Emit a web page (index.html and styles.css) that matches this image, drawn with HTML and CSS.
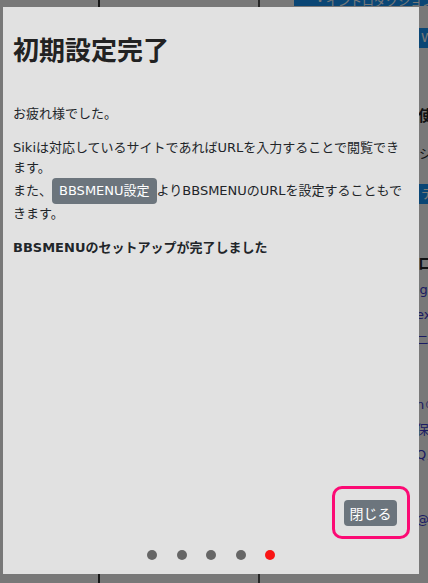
FILE: index.html
```html
<!DOCTYPE html>
<html lang="ja">
<head>
    <meta charset="UTF-8">
    <title>Siki</title>
    <link rel="stylesheet" href="styles.css">
</head>
<body>
    <div class="page">
        <div class="col col-a"></div>
        <div class="col col-b"></div>
        <div class="col col-c"></div>
        <aside class="col side">
            <div class="side-nav">・イントロダクション</div>
            <div class="side-label">WEB</div>
            <p class="side-head">使い方</p>
            <p class="side-text">シンプル</p>
            <div class="side-label">ティップス</div>
            <p class="side-head side-gap">ロード</p>
            <a class="side-link">lgプ</a>
            <a class="side-link">ex</a>
            <a class="side-link">ニ</a>
            <a class="side-link side-gap">n©</a>
            <a class="side-link">保す</a>
            <a class="side-link">Qス</a>
            <a class="side-link side-gap">@o</a>
        </aside>
    </div>

    <div class="backdrop"></div>

    <div class="modal">
        <div class="modal-body">
            <h1 class="modal-title">初期設定完了</h1>
            <p>お疲れ様でした。</p>
            <p>
                Sikiは対応しているサイトであればURLを入力することで閲覧できます。<br>
                また、<span class="badge">BBSMENU設定</span>よりBBSMENUのURLを設定することもできます。
            </p>
            <p class="done">BBSMENUのセットアップが完了しました</p>
        </div>
        <div class="modal-footer">
            <div class="focus-ring">
                <button class="btn-close">閉じる</button>
            </div>
        </div>
        <div class="dots">
            <span class="dot"></span>
            <span class="dot"></span>
            <span class="dot"></span>
            <span class="dot"></span>
            <span class="dot active"></span>
        </div>
    </div>
</body>
</html>
```

FILE: styles.css
```css
* {
    margin: 0;
    padding: 0;
    box-sizing: border-box;
}
body {
    font-family: "DejaVu Sans", "Noto Sans CJK JP", sans-serif;
    background-color: #fff;
    color: #212529;
    overflow: hidden;
}
.page {
    display: flex;
    height: 583px;
}
.col-a {
    width: 100px;
    border-right: 2px solid #333;
}
.col-b {
    width: 160px;
    border-right: 2px solid #555;
}
.col-c {
    width: 34px;
}
.side {
    flex: 1;
    font-size: 13px;
    white-space: nowrap;
    overflow: hidden;
}
.side-nav {
    height: 6px;
    background-color: #1796f8;
    color: #fff;
    font-size: 12px;
    line-height: 4px;
    padding-left: 20px;
}
.side-label {
    margin: 22px 0 0 125px;
    height: 20px;
    line-height: 20px;
    padding-left: 2px;
    background-color: #1796f8;
    color: #fff;
}
.side-head {
    margin: 60px 0 0 124px;
    font-weight: bold;
    line-height: 16px;
    font-size: 15px;
}
.side-text {
    margin: 22px 0 0 125px;
    line-height: 16px;
    margin-bottom: 14px;
}
.side-head.side-gap {
    margin-top: 52px;
}
.side-link {
    display: block;
    margin-left: 122px;
    color: #3b3bd0;
    line-height: 15px;
    margin-top: 10px;
}
.side-link.side-gap {
    margin-top: 50px;
}
.backdrop {
    position: fixed;
    top: 0;
    left: 0;
    right: 0;
    bottom: 0;
    background-color: rgba(0, 0, 0, 0.53);
}
.modal {
    position: fixed;
    left: 3px;
    top: 7px;
    width: 416px;
    height: 567px;
    background-color: #e1e1e1;
    display: flex;
    flex-direction: column;
    padding: 29px 10px 14px;
}
.modal-body {
    flex: 1;
    font-size: 13px;
    line-height: 20px;
}
.modal-title {
    font-size: 26px;
    line-height: 31px;
    font-weight: bold;
    color: #222;
    margin-bottom: 37px;
}
.modal-body p {
    margin-bottom: 14px;
}
.badge {
    display: inline-block;
    vertical-align: middle;
    background-color: #6c757d;
    color: #fff;
    line-height: 20px;
    padding: 3px 7px;
    border-radius: 4px;
}
.modal-body .done {
    font-weight: bold;
}
.modal-footer {
    display: flex;
    justify-content: flex-end;
    margin-right: -1px;
}
.focus-ring {
    border: 3px solid #fc0a74;
    border-radius: 10px;
    padding: 11px 10px 10px 9px;
}
.btn-close {
    display: block;
    border: none;
    outline: none;
    background-color: #6c757d;
    color: #fff;
    font-family: inherit;
    font-size: 14px;
    width: 53px;
    height: 26px;
    border-radius: 4px;
}
.dots {
    display: flex;
    justify-content: center;
    gap: 19.5px;
    margin-top: 11px;
}
.dot {
    width: 10px;
    height: 10px;
    border-radius: 50%;
    background-color: #666;
}
.dot.active {
    background-color: #f91515;
}
```
